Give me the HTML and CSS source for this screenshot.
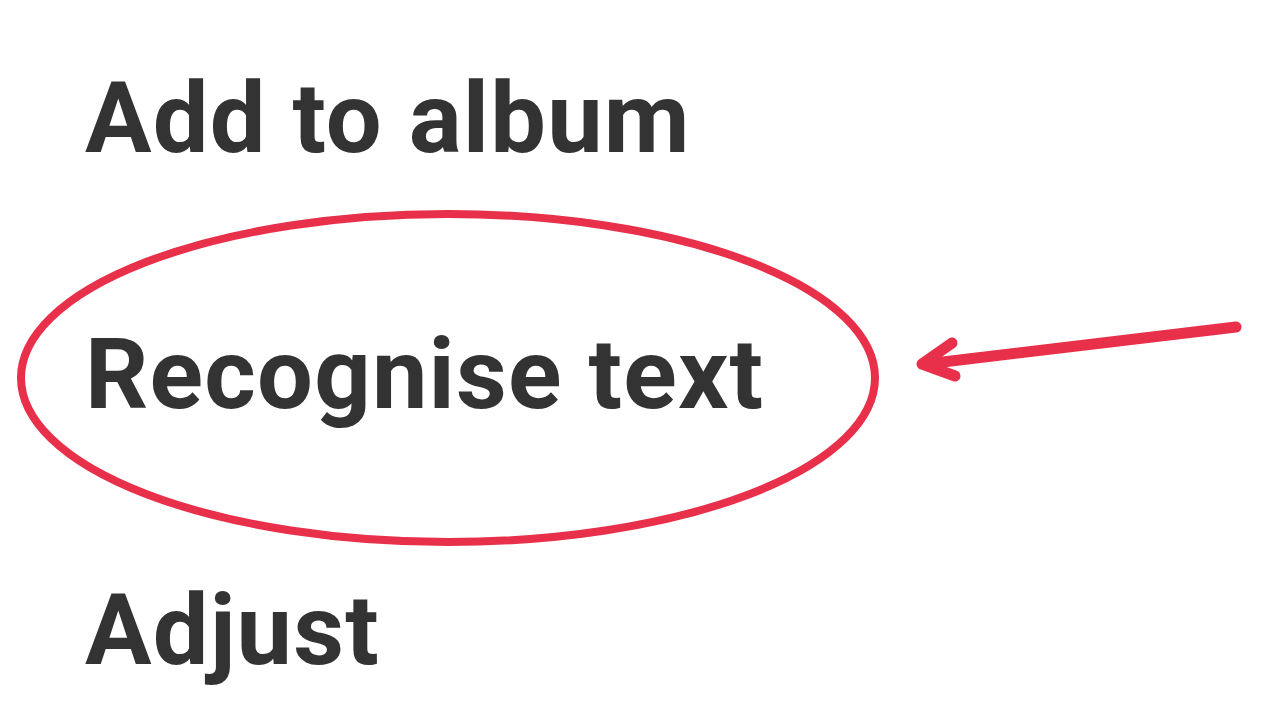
FILE: index.html
```html
<!DOCTYPE html>
<html lang="en">
<head>
<meta charset="utf-8">
<title>Photo options</title>
<link rel="stylesheet" href="styles.css">
</head>
<body>
<main class="sheet">
  <ul class="menu">
    <li class="menu-item">Add to album</li>
    <li class="menu-item">Recognise text</li>
    <li class="menu-item">Adjust</li>
  </ul>
  <svg class="markup" width="1280" height="720" viewBox="0 0 1280 720" aria-hidden="true">
    <ellipse cx="448" cy="378" rx="427" ry="164" fill="none" stroke="#e8304a" stroke-width="8"/>
    <g fill="none" stroke="#e8304a" stroke-width="11" stroke-linecap="round" stroke-linejoin="round">
      <path d="M1236 327 L926 364"/>
      <path d="M952 343 L922 364 L955 376"/>
    </g>
  </svg>
</main>
</body>
</html>
```

FILE: styles.css
```css
html, body {
  margin: 0;
  padding: 0;
  background: #ffffff;
}

.sheet {
  position: relative;
  width: 1280px;
  height: 720px;
  overflow: hidden;
  background: #ffffff;
}

.menu {
  list-style: none;
  margin: 0;
  padding: 53px 0 0 85px;
  display: flex;
  flex-direction: column;
}

.menu-item {
  height: 256px;
  line-height: 130px;
  font-family: Roboto, "Noto Sans", sans-serif;
  font-weight: 700;
  font-size: 99px;
  letter-spacing: 1.2px;
  color: #333333;
  white-space: nowrap;
}

.markup {
  position: absolute;
  left: 0;
  top: 0;
  pointer-events: none;
}
```
